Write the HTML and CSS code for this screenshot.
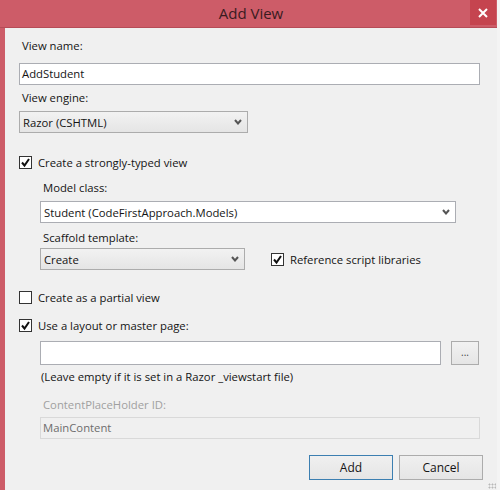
FILE: index.html
```html
<!DOCTYPE html>
<html>
<head>
<meta charset="utf-8">
<link rel="stylesheet" href="styles.css">
</head>
<body>
<div class="window">
  <div class="titlebar">
    <div class="title">Add View</div>
    <div class="close"><svg width="10" height="10" viewBox="0 0 10 10"><path d="M1 1L9 9M9 1L1 9" stroke="#fff" stroke-width="2"/></svg></div>
  </div>
  <div class="content">
    <div class="label l1">View name:</div>
    <div class="field f-name">AddStudent</div>
    <div class="label l2">View engine:</div>
    <div class="select gray f-engine"><span>Razor (CSHTML)</span><svg class="chev" width="8" height="6" viewBox="0 0 8 6"><path d="M1 1L4 4.5L7 1" fill="none" stroke="#555" stroke-width="2"/></svg></div>

    <div class="check-row c1"><span class="box"><svg width="11" height="11" viewBox="0 0 11 11"><path d="M2 5.5L4.5 8.5L9 2" fill="none" stroke="#111" stroke-width="2"/></svg></span><span>Create a strongly-typed view</span></div>
    <div class="indent">
      <div class="label l3">Model class:</div>
      <div class="select white f-model"><span>Student (CodeFirstApproach.Models)</span><svg class="chev" width="8" height="6" viewBox="0 0 8 6"><path d="M1 1L4 4.5L7 1" fill="none" stroke="#555" stroke-width="2"/></svg></div>
      <div class="label l4">Scaffold template:</div>
      <div class="row scaffold">
        <div class="select gray f-create"><span>Create</span><svg class="chev" width="8" height="6" viewBox="0 0 8 6"><path d="M1 1L4 4.5L7 1" fill="none" stroke="#555" stroke-width="2"/></svg></div>
        <div class="check-row inline"><span class="box"><svg width="11" height="11" viewBox="0 0 11 11"><path d="M2 5.5L4.5 8.5L9 2" fill="none" stroke="#111" stroke-width="2"/></svg></span><span>Reference script libraries</span></div>
      </div>
    </div>

    <div class="check-row c2"><span class="box"></span><span>Create as a partial view</span></div>
    <div class="check-row c3"><span class="box"><svg width="11" height="11" viewBox="0 0 11 11"><path d="M2 5.5L4.5 8.5L9 2" fill="none" stroke="#111" stroke-width="2"/></svg></span><span>Use a layout or master page:</span></div>
    <div class="indent">
      <div class="row layout">
        <div class="field f-layout"></div>
        <div class="browse">...</div>
      </div>
      <div class="hint">(Leave empty if it is set in a Razor _viewstart file)</div>
      <div class="label disabled l5">ContentPlaceHolder ID:</div>
      <div class="field f-main">MainContent</div>
    </div>

    <div class="buttons">
      <div class="btn default">Add</div>
      <div class="btn">Cancel</div>
    </div>
  </div>
  <div class="grip"></div>
</div>
</body>
</html>
```

FILE: styles.css
```css
html, body {
  margin: 0;
  padding: 0;
  background: #f4f4f4;
}
body {
  font-family: "Open Sans", "Noto Sans", sans-serif;
  font-size: 11.3px;
  color: #141414;
}
.window {
  position: relative;
  width: 497px;
  height: 490px;
  background: #f0f0f0;
  overflow: hidden;
}
.titlebar {
  height: 27px;
  background: #cd5c68;
  border-bottom: 1px solid #b64c57;
  display: flex;
  align-items: flex-start;
}
.title {
  flex: 1;
  text-align: center;
  padding-left: 32px;
  font-size: 15px;
  line-height: 26px;
  color: #3a1b1f;
}
.close {
  width: 26px;
  height: 25px;
  margin-right: 1px;
  background: #c5444f;
  display: flex;
  align-items: center;
  justify-content: center;
}
.content {
  border-left: 5px solid #cd5c68;
  height: 462px;
  padding: 10px 17px 0 14px;
  box-sizing: border-box;
}
.label {
  height: 16px;
  line-height: 16px;
  padding-left: 3px;
}
.label.disabled { color: #a0a0a0; }
.l2 { margin-top: 5px; }
.l3 { margin-top: 10px; }
.l4 { margin-top: 7px; }
.l5 { margin-top: 12px; }
.field {
  box-sizing: border-box;
  height: 22px;
  border: 1px solid #abadb3;
  background: #fff;
  line-height: 20px;
  padding-left: 2px;
}
.f-name { margin-top: 9px; }
.f-layout { flex: 1; height: 24px; }
.f-main {
  margin-top: 4px;
  background: #f0f0f0;
  border-color: #d9d9d9;
  color: #6d6d6d;
}
.select {
  box-sizing: border-box;
  height: 22px;
  display: flex;
  align-items: center;
  justify-content: space-between;
  padding: 0 4px 0 3px;
  border: 1px solid #acacac;
}
.select.gray { background: linear-gradient(#f2f2f2, #e5e5e5); }
.select.white { background: #fff; border-color: #abadb3; }
.f-engine { width: 229px; margin-top: 5px; }
.f-model { width: 416px; margin-top: 5px; }
.f-create { width: 205px; }
.chev { margin-right: 1px; }
.check-row {
  display: flex;
  align-items: center;
  height: 16px;
  gap: 6px;
}
.c1 { margin-top: 21px; }
.c2 { margin-top: 19px; }
.c3 { margin-top: 12px; }
.box {
  box-sizing: border-box;
  width: 13px;
  height: 13px;
  border: 1px solid #333;
  background: #fff;
  display: flex;
  align-items: center;
  justify-content: center;
}
.indent { padding-left: 21px; }
.row { display: flex; align-items: center; }
.scaffold { margin-top: 2px; gap: 26px; }
.layout { margin-top: 8px; gap: 10px; margin-right: 1px; }
.browse {
  box-sizing: border-box;
  width: 28px;
  height: 24px;
  border: 1px solid #acacac;
  background: linear-gradient(#f2f2f2, #e5e5e5);
  text-align: center;
  line-height: 20px;
  font-size: 10px;
  color: #444;
}
.hint {
  margin-top: 4px;
  height: 16px;
  line-height: 16px;
  padding-left: 1px;
}
.buttons {
  display: flex;
  justify-content: flex-end;
  gap: 6px;
  margin-top: 16px;
  margin-right: -3px;
}
.btn {
  box-sizing: border-box;
  width: 84px;
  height: 25px;
  border: 1px solid #acacac;
  background: linear-gradient(#f0f0f0, #e5e5e5);
  text-align: center;
  line-height: 23px;
  font-size: 12px;
}
.btn.default { border-color: #3c7fb1; }
.grip {
  position: absolute;
  right: 1px;
  bottom: 1px;
  width: 8px;
  height: 6px;
  background-image: radial-gradient(circle, #b8b8b8 0.8px, transparent 1.2px);
  background-size: 3px 3px;
}
```
